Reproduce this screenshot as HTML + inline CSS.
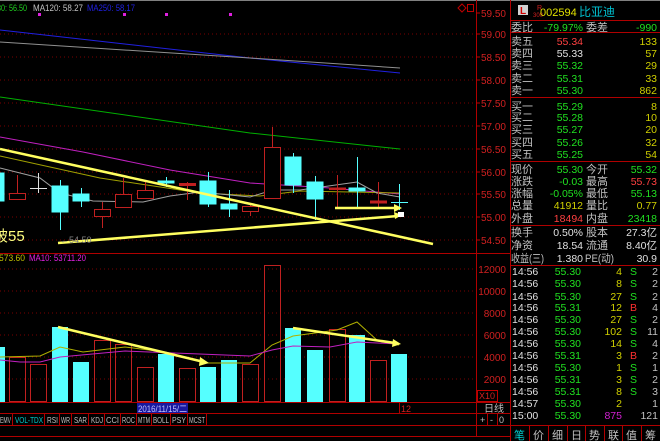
<!DOCTYPE html>
<html><head><meta charset="utf-8"><style>
html,body{margin:0;padding:0;background:#000;overflow:hidden}
svg{display:block}
text{font-family:"Liberation Sans","Noto Sans CJK SC",sans-serif}
</style></head><body>
<svg width="660" height="441" viewBox="0 0 660 441" xmlns="http://www.w3.org/2000/svg">
<rect width="660" height="441" fill="#000"/>
<line x1="0" y1="0.5" x2="660" y2="0.5" stroke="#808080"/>
<g stroke="#7a0000" stroke-dasharray="1,3" stroke-width="1">
<line x1="0" y1="34" x2="476" y2="34"/><line x1="0" y1="57" x2="476" y2="57"/><line x1="0" y1="80" x2="476" y2="80"/><line x1="0" y1="103" x2="476" y2="103"/><line x1="0" y1="126" x2="476" y2="126"/><line x1="0" y1="149" x2="476" y2="149"/><line x1="0" y1="172" x2="476" y2="172"/><line x1="0" y1="194" x2="476" y2="194"/><line x1="0" y1="217" x2="476" y2="217"/><line x1="0" y1="240" x2="476" y2="240"/>
<line x1="0" y1="269" x2="476" y2="269"/><line x1="0" y1="291" x2="476" y2="291"/><line x1="0" y1="313" x2="476" y2="313"/><line x1="0" y1="335" x2="476" y2="335"/><line x1="0" y1="357" x2="476" y2="357"/><line x1="0" y1="379" x2="476" y2="379"/>
</g>
<g stroke="#b00000" stroke-width="1" fill="none">
<line x1="476.5" y1="0" x2="476.5" y2="436"/>
<line x1="510.5" y1="0" x2="510.5" y2="441"/>
<line x1="0" y1="253.5" x2="510" y2="253.5"/>
<line x1="0" y1="402.5" x2="510" y2="402.5"/>
<line x1="0" y1="413.5" x2="510" y2="413.5"/>
<line x1="0" y1="425.5" x2="510" y2="425.5"/>
<line x1="0" y1="436.5" x2="510" y2="436.5"/>
</g>
<g stroke="#c00000"><line x1="476" y1="13" x2="480" y2="13"/><line x1="476" y1="34" x2="480" y2="34"/><line x1="476" y1="57" x2="480" y2="57"/><line x1="476" y1="80" x2="480" y2="80"/><line x1="476" y1="103" x2="480" y2="103"/><line x1="476" y1="126" x2="480" y2="126"/><line x1="476" y1="149" x2="480" y2="149"/><line x1="476" y1="172" x2="480" y2="172"/><line x1="476" y1="194" x2="480" y2="194"/><line x1="476" y1="217" x2="480" y2="217"/><line x1="476" y1="240" x2="480" y2="240"/></g>
<g fill="#d02020" font-size="10" text-anchor="end">
<text x="506" y="17">59.50</text><text x="506" y="38">59.00</text><text x="506" y="61">58.50</text><text x="506" y="84">58.00</text><text x="506" y="107">57.50</text><text x="506" y="130">57.00</text><text x="506" y="153">56.50</text><text x="506" y="176">56.00</text><text x="506" y="198">55.50</text><text x="506" y="221">55.00</text><text x="506" y="244">54.50</text>
<text x="506" y="273">12000</text><text x="506" y="295">10000</text><text x="506" y="317">8000</text><text x="506" y="339">6000</text><text x="506" y="361">4000</text><text x="506" y="383">2000</text>
</g>
<rect x="477.5" y="390.5" width="20" height="11" fill="none" stroke="#c00000"/>
<text x="479" y="399" fill="#d02020" font-size="9">X10</text>
<text x="484" y="412" fill="#c0c0c0" font-size="10">日线</text>
<g stroke="#b00000" fill="none"><line x1="487.5" y1="414" x2="487.5" y2="426"/><line x1="497.5" y1="414" x2="497.5" y2="426"/></g>
<g fill="#c0c0c0" font-size="9"><text x="480" y="423">+</text><text x="490" y="423">-</text><text x="499" y="423">0</text></g>
<g font-size="9.5">
<text x="-3" y="11" fill="#20d020" textLength="30" lengthAdjust="spacingAndGlyphs">30: 56.50</text>
<text x="33" y="11" fill="#c0c0c0" textLength="50" lengthAdjust="spacingAndGlyphs">MA120: 58.27</text>
<text x="87" y="11" fill="#2020e0" textLength="48" lengthAdjust="spacingAndGlyphs">MA250: 58.17</text>
</g>
<g fill="#e020e0"><rect x="38" y="13" width="3" height="3"/><rect x="123" y="13" width="3" height="3"/><rect x="165" y="13" width="3" height="3"/><rect x="229" y="13" width="3" height="3"/></g>
<path d="M458 8 L462 4 L466 8 L462 12 Z" fill="none" stroke="#c00000"/>
<rect x="467.5" y="4.5" width="6" height="7" fill="none" stroke="#c00000"/>
<g fill="none" stroke-width="1">
<polyline points="0,30 250,58 400,73" stroke="#2020e0"/>
<polyline points="0,42 250,58 400,68" stroke="#909090"/>
<polyline points="0,97 250,133 400,149" stroke="#00b000"/>
<polyline points="0,137 83,152 170,170 250,183 330,188 400,194" stroke="#c020c0"/>
<polyline points="0,156 100,178 200,193 260,196 300,191 400,193" stroke="#a0a000"/>
<polyline points="0,168 40,178 60,193 93,201 143,202 170,196 200,192 250,197 273,190 300,190 357,182 377,193 400,197" stroke="#a0a0a0"/>
</g>
<g stroke="#c02020" fill="#000">
<rect x="9.5" y="193.5" width="16" height="6"/><line x1="17.5" y1="175" x2="17.5" y2="193"/>
<line x1="102.5" y1="202" x2="102.5" y2="209"/><line x1="102.5" y1="217" x2="102.5" y2="228"/><rect x="94.5" y="209.5" width="16" height="7"/>
<line x1="123.5" y1="178" x2="123.5" y2="194"/><rect x="115.5" y="194.5" width="16" height="13"/>
<line x1="145.5" y1="182" x2="145.5" y2="190"/><rect x="137.5" y="190.5" width="16" height="8"/>
<line x1="187.5" y1="182" x2="187.5" y2="200"/><rect x="179.5" y="183.5" width="16" height="2" fill="#c02020"/>
<line x1="250.5" y1="204" x2="250.5" y2="216"/><rect x="242.5" y="206.5" width="16" height="5"/>
<line x1="272.5" y1="127" x2="272.5" y2="147"/><rect x="264.5" y="147.5" width="16" height="51"/>
<line x1="337.5" y1="175" x2="337.5" y2="207"/><rect x="329.5" y="188" width="16" height="1.5" fill="#c02020"/>
<line x1="378.5" y1="182" x2="378.5" y2="207"/><rect x="370.5" y="201" width="16" height="2" fill="#c02020"/>
</g>
<g fill="#55ffff" stroke="#55ffff">
<rect x="-10" y="173" width="14" height="28"/>
<line x1="60.5" y1="180" x2="60.5" y2="230"/><rect x="52" y="186" width="16" height="26"/>
<line x1="81.5" y1="188" x2="81.5" y2="207"/><rect x="73" y="194" width="16" height="7"/>
<line x1="166.5" y1="177" x2="166.5" y2="187"/><rect x="158" y="181" width="16" height="2"/>
<line x1="208.5" y1="172" x2="208.5" y2="207"/><rect x="200" y="181" width="16" height="23"/>
<line x1="229.5" y1="190" x2="229.5" y2="217"/><rect x="221" y="204" width="16" height="5"/>
<line x1="293.5" y1="153" x2="293.5" y2="193"/><rect x="285" y="157" width="16" height="28"/>
<line x1="315.5" y1="176" x2="315.5" y2="220"/><rect x="307" y="182" width="16" height="17"/>
<line x1="357.5" y1="157" x2="357.5" y2="207"/><rect x="349" y="188" width="16" height="3"/>
<line x1="399.5" y1="184" x2="399.5" y2="210"/><line x1="391" y1="202.5" x2="408" y2="202.5"/>
</g>
<g stroke="#e0e0e0"><line x1="38.5" y1="173" x2="38.5" y2="193"/><line x1="30" y1="188.5" x2="47" y2="188.5"/></g>
<g stroke="#ffff60" stroke-width="2.5" fill="none">
<line x1="0" y1="149" x2="433" y2="244"/>
<line x1="58" y1="243" x2="398" y2="216"/>
<line x1="335" y1="208" x2="396" y2="208"/>
</g>
<path d="M394 204 L402 208 L394 212 Z" fill="#ffff60"/>
<path d="M394 212 L402 215 L395 219 Z" fill="#ffff60"/>
<rect x="398" y="212" width="6" height="5" fill="#fff"/>
<text x="-7" y="241" fill="#ffff80" font-size="15">跛55</text>
<text x="60" y="243" fill="#808080" font-size="9">←54.50</text>
<text x="-1" y="261" fill="#c0c000" font-size="9.5" textLength="26" lengthAdjust="spacingAndGlyphs">573.60</text>
<text x="29" y="261" fill="#e020e0" font-size="9.5" textLength="57" lengthAdjust="spacingAndGlyphs">MA10: 53711.20</text>
<g fill="#55ffff">
<rect x="-10" y="347" width="15" height="55"/>
<rect x="52" y="327" width="16" height="75"/>
<rect x="73" y="362" width="16" height="40"/>
<rect x="158" y="354" width="16" height="48"/>
<rect x="200" y="367" width="16" height="35"/>
<rect x="221" y="360" width="16" height="42"/>
<rect x="285" y="328" width="16" height="74"/>
<rect x="307" y="350" width="16" height="52"/>
<rect x="349" y="335" width="16" height="67"/>
<rect x="391" y="354" width="16" height="48"/>
</g>
<g fill="none" stroke="#c02020">
<rect x="9.5" y="357.5" width="16" height="44"/>
<rect x="30.5" y="364.5" width="16" height="37"/>
<rect x="94.5" y="340.5" width="16" height="61"/>
<rect x="115.5" y="344.5" width="16" height="57"/>
<rect x="137.5" y="367.5" width="16" height="34"/>
<rect x="179.5" y="368.5" width="16" height="33"/>
<rect x="242.5" y="364.5" width="16" height="37"/>
<rect x="264.5" y="265.5" width="16" height="136"/>
<rect x="329.5" y="329.5" width="16" height="72"/>
<rect x="370.5" y="360.5" width="16" height="41"/>
</g>
<polyline points="0,357 40,356 60,347 83,352 125,347 165,352 208,363 250,363 272,345 293,336 337,330 357,322 378,341 399,345" fill="none" stroke="#b0b000"/>
<polyline points="0,360 20,362 40,362 60,357 125,351 250,356 272,350 293,346 330,347 357,342 399,344" fill="none" stroke="#c020c0"/>
<g stroke="#ffff60" stroke-width="2.5"><line x1="58" y1="327" x2="204" y2="362"/><line x1="293" y1="328" x2="395" y2="343"/></g>
<path d="M200 357 L209 363 L199 366 Z" fill="#ffff60"/><path d="M393 339 L401 344 L392 347 Z" fill="#ffff60"/>
<rect x="137" y="403" width="51" height="10" fill="#1818a0"/>
<text x="138" y="412" fill="#c0c0ff" font-size="9" textLength="49" lengthAdjust="spacingAndGlyphs">2016/11/15/二</text>
<text x="401" y="412" fill="#d02020" font-size="9">12</text>
<line x1="399.5" y1="403" x2="399.5" y2="413" stroke="#b00000"/>
<g stroke="#b00000"><line x1="12.5" y1="414" x2="12.5" y2="425"/><line x1="44.5" y1="414" x2="44.5" y2="425"/><line x1="59.5" y1="414" x2="59.5" y2="425"/><line x1="71.5" y1="414" x2="71.5" y2="425"/><line x1="88.5" y1="414" x2="88.5" y2="425"/><line x1="104.5" y1="414" x2="104.5" y2="425"/><line x1="120.5" y1="414" x2="120.5" y2="425"/><line x1="136.5" y1="414" x2="136.5" y2="425"/><line x1="151.5" y1="414" x2="151.5" y2="425"/><line x1="170.5" y1="414" x2="170.5" y2="425"/><line x1="187.5" y1="414" x2="187.5" y2="425"/><line x1="206.5" y1="414" x2="206.5" y2="425"/></g>
<g fill="#c0c0c0" font-size="8" font-family="Liberation Mono">
<text x="0" y="423" textLength="11" lengthAdjust="spacingAndGlyphs">EMV</text>
<text x="15" y="423" fill="#00d0d0" textLength="28" lengthAdjust="spacingAndGlyphs">VOL-TDX</text>
<text x="47" y="423" textLength="11" lengthAdjust="spacingAndGlyphs">RSI</text>
<text x="61" y="423" textLength="9" lengthAdjust="spacingAndGlyphs">WR</text>
<text x="74" y="423" textLength="13" lengthAdjust="spacingAndGlyphs">SAR</text>
<text x="91" y="423" textLength="12" lengthAdjust="spacingAndGlyphs">KDJ</text>
<text x="106" y="423" textLength="13" lengthAdjust="spacingAndGlyphs">CCI</text>
<text x="122" y="423" textLength="13" lengthAdjust="spacingAndGlyphs">ROC</text>
<text x="138" y="423" textLength="12" lengthAdjust="spacingAndGlyphs">MTM</text>
<text x="153" y="423" textLength="16" lengthAdjust="spacingAndGlyphs">BOLL</text>
<text x="172" y="423" textLength="14" lengthAdjust="spacingAndGlyphs">PSY</text>
<text x="189" y="423" textLength="16" lengthAdjust="spacingAndGlyphs">MCST</text>
</g>
<g stroke="#b00000"><line x1="511" y1="20.5" x2="660" y2="20.5"/><line x1="511" y1="32.5" x2="660" y2="32.5"/><line x1="511" y1="97.5" x2="660" y2="97.5"/><line x1="511" y1="161.5" x2="660" y2="161.5"/><line x1="511" y1="225.5" x2="660" y2="225.5"/><line x1="511" y1="265.5" x2="660" y2="265.5"/><line x1="511" y1="425.5" x2="660" y2="425.5"/></g>
<rect x="518" y="5" width="10" height="10" fill="#d0d0d0"/><text x="520" y="14" fill="#d00000" font-size="10" font-weight="bold">L</text>
<text x="537" y="10" fill="#d02020" font-size="7">R</text><text x="533" y="17" fill="#d02020" font-size="6">300</text>
<text x="540" y="16" fill="#e0e000" font-size="11">002594</text>
<text x="579" y="16" fill="#00c0d0" font-size="12">比亚迪</text>
<g font-size="11">
<g fill="#c0c0c0"><text x="511" y="31">委比</text><text x="586" y="31">委差</text>
<text x="511" y="45">卖五</text><text x="511" y="57">卖四</text><text x="511" y="69">卖三</text><text x="511" y="82">卖二</text><text x="511" y="94">卖一</text>
<text x="511" y="110">买一</text><text x="511" y="121">买二</text><text x="511" y="133">买三</text><text x="511" y="146">买四</text><text x="511" y="158">买五</text>
<text x="511" y="173">现价</text><text x="511" y="185">涨跌</text><text x="511" y="197">涨幅</text><text x="511" y="209">总量</text><text x="511" y="222">外盘</text>
<text x="586" y="173">今开</text><text x="586" y="185">最高</text><text x="586" y="197">最低</text><text x="586" y="209">量比</text><text x="586" y="222">内盘</text>
<text x="511" y="236">换手</text><text x="586" y="236">股本</text><text x="511" y="249">净资</text><text x="586" y="249">流通</text>
<text x="511" y="262" textLength="33" lengthAdjust="spacingAndGlyphs">收益(三)</text><text x="585" y="262" textLength="29" lengthAdjust="spacingAndGlyphs">PE(动)</text></g>
</g>
<g font-size="10.5" text-anchor="end">
<text x="583" y="31" fill="#20e020">-79.97%</text><text x="657" y="31" fill="#20e020">-990</text>
<text x="583" y="45" fill="#ff4040">55.34</text><text x="583" y="57" fill="#e0e0e0">55.33</text>
<g fill="#20e020"><text x="583" y="69">55.32</text><text x="583" y="82">55.31</text><text x="583" y="94">55.30</text><text x="583" y="110">55.29</text><text x="583" y="121">55.28</text><text x="583" y="133">55.27</text><text x="583" y="146">55.26</text><text x="583" y="158">55.25</text>
<text x="583" y="173">55.30</text><text x="583" y="185">-0.03</text><text x="583" y="197">-0.05%</text><text x="657" y="173">55.32</text><text x="657" y="197">55.13</text><text x="657" y="222">23418</text></g>
<g fill="#d0d000"><text x="657" y="45">133</text><text x="657" y="57">57</text><text x="657" y="69">29</text><text x="657" y="82">33</text><text x="657" y="94">862</text><text x="657" y="110">8</text><text x="657" y="121">10</text><text x="657" y="133">20</text><text x="657" y="146">32</text><text x="657" y="158">54</text><text x="583" y="209">41912</text><text x="657" y="209">0.77</text></g>
<text x="657" y="185" fill="#ff4040">55.73</text><text x="583" y="222" fill="#ff4040">18494</text>
<g fill="#e0e0e0"><text x="583" y="236">0.50%</text><text x="657" y="236">27.3亿</text><text x="583" y="249">18.54</text><text x="657" y="249">8.40亿</text><text x="583" y="262">1.380</text><text x="657" y="262">30.9</text></g>
</g>
<g font-size="10.5">
<g fill="#e0e0e0"><text x="512" y="275">14:56</text><text x="512" y="287">14:56</text><text x="512" y="300">14:56</text><text x="512" y="311">14:56</text><text x="512" y="323">14:56</text><text x="512" y="335">14:56</text><text x="512" y="347">14:56</text><text x="512" y="359">14:56</text><text x="512" y="371">14:56</text><text x="512" y="383">14:56</text><text x="512" y="395">14:56</text><text x="512" y="407">14:57</text><text x="512" y="419">15:00</text></g>
<g fill="#20e020" text-anchor="end"><text x="581" y="275">55.30</text><text x="581" y="287">55.30</text><text x="581" y="300">55.30</text><text x="581" y="311">55.31</text><text x="581" y="323">55.30</text><text x="581" y="335">55.30</text><text x="581" y="347">55.30</text><text x="581" y="359">55.31</text><text x="581" y="371">55.30</text><text x="581" y="383">55.31</text><text x="581" y="395">55.31</text><text x="581" y="407">55.30</text><text x="581" y="419">55.30</text></g>
<g fill="#d0d000" text-anchor="end"><text x="622" y="275">4</text><text x="622" y="287">8</text><text x="622" y="300">27</text><text x="622" y="311">12</text><text x="622" y="323">27</text><text x="622" y="335">102</text><text x="622" y="347">14</text><text x="622" y="359">3</text><text x="622" y="371">1</text><text x="622" y="383">3</text><text x="622" y="395">8</text><text x="622" y="407">2</text><text x="622" y="419" fill="#d020d0">875</text></g>
<g fill="#20e020"><text x="630" y="275">S</text><text x="630" y="287">S</text><text x="630" y="300">S</text><text x="630" y="311" fill="#ff3030">B</text><text x="630" y="323">S</text><text x="630" y="335">S</text><text x="630" y="347">S</text><text x="630" y="359" fill="#ff3030">B</text><text x="630" y="371">S</text><text x="630" y="383">S</text><text x="630" y="395">S</text></g>
<g fill="#c0c0c0" text-anchor="end"><text x="658" y="275">2</text><text x="658" y="287">2</text><text x="658" y="300">2</text><text x="658" y="311">4</text><text x="658" y="323">2</text><text x="658" y="335">11</text><text x="658" y="347">4</text><text x="658" y="359">2</text><text x="658" y="371">1</text><text x="658" y="383">2</text><text x="658" y="395">3</text><text x="658" y="407">1</text><text x="658" y="419">121</text></g>
</g>
<g stroke="#b00000"><line x1="529.5" y1="426" x2="529.5" y2="441"/><line x1="548.5" y1="426" x2="548.5" y2="441"/><line x1="567.5" y1="426" x2="567.5" y2="441"/><line x1="585.5" y1="426" x2="585.5" y2="441"/><line x1="604.5" y1="426" x2="604.5" y2="441"/><line x1="622.5" y1="426" x2="622.5" y2="441"/><line x1="641.5" y1="426" x2="641.5" y2="441"/></g>
<g font-size="11" fill="#c0c0c0"><text x="514" y="439" fill="#00d0d0">笔</text><text x="533" y="439">价</text><text x="552" y="439">细</text><text x="571" y="439">日</text><text x="589" y="439">势</text><text x="608" y="439">联</text><text x="626" y="439">值</text><text x="645" y="439">筹</text></g>
</svg>
</body></html>
